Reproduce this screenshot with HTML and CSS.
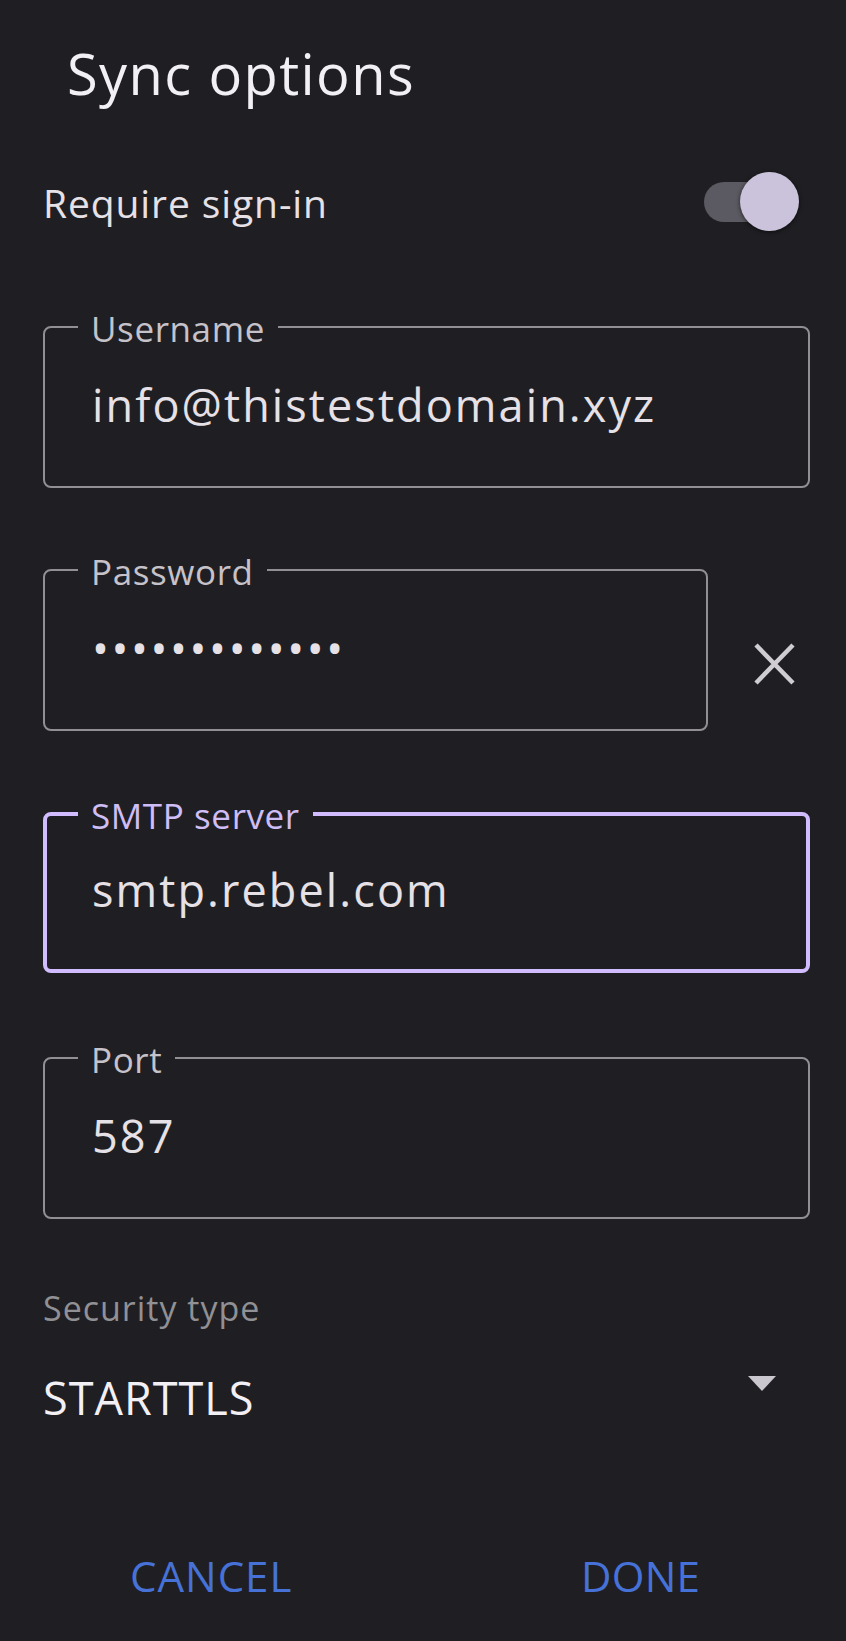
FILE: index.html
```html
<!DOCTYPE html>
<html lang="en">
<head>
  <meta charset="UTF-8">
  <meta name="viewport" content="width=device-width, initial-scale=1.0">
  <title>Sync options</title>
  <link rel="stylesheet" href="styles.css">
</head>
<body>
  <div class="dialog">
    <h1 class="title">Sync options</h1>

    <div class="switch-row">
      <span class="switch-label">Require sign-in</span>
      <span class="switch on">
        <span class="switch-track"></span>
        <span class="switch-thumb"></span>
      </span>
    </div>

    <fieldset class="field">
      <legend>Username</legend>
      <input type="text" value="info@thistestdomain.xyz">
    </fieldset>

    <div class="field-row">
      <fieldset class="field">
        <legend>Password</legend>
        <input type="password" class="secret" value="passwordpass1">
      </fieldset>
      <button type="button" class="clear" aria-label="Clear password">
        <svg width="43" height="42" viewBox="0 0 43 42">
          <path d="M3 2 L40 40 M40 2 L3 40" stroke="#cfcdd2" stroke-width="4.5" fill="none"/>
        </svg>
      </button>
    </div>

    <fieldset class="field focused">
      <legend>SMTP server</legend>
      <input type="text" value="smtp.rebel.com">
    </fieldset>

    <fieldset class="field">
      <legend>Port</legend>
      <input type="text" value="587">
    </fieldset>

    <div class="select-label">Security type</div>
    <div class="select">
      <span class="select-value">STARTTLS</span>
      <span class="select-arrow"></span>
    </div>

    <div class="actions">
      <button type="button" class="text-btn">CANCEL</button>
      <button type="button" class="text-btn">DONE</button>
    </div>
  </div>
</body>
</html>
```

FILE: styles.css
```css
body {
  margin: 0;
  background-color: #1f1f23;
  font-family: "Open Sans", Roboto, sans-serif;
  color: #e6e1e6;
}
.dialog {
  padding: 40px 36px 40px 43px;
}
.title {
  margin: 0;
  padding-left: 24px;
  font-size: 56px;
  font-weight: 400;
  line-height: 67px;
  letter-spacing: 1.4px;
  color: #f3f0f5;
}
.switch-row {
  display: flex;
  align-items: center;
  justify-content: space-between;
  height: 60px;
  margin-top: 65px;
}
.switch-label {
  font-size: 39px;
  line-height: 47px;
  letter-spacing: 0.9px;
}
.switch {
  position: relative;
  width: 95px;
  height: 60px;
  margin-right: 11px;
}
.switch-track {
  position: absolute;
  left: 0;
  top: 10px;
  width: 84px;
  height: 40px;
  border-radius: 20px;
  background-color: #5b5961;
}
.switch-thumb {
  position: absolute;
  right: 0;
  top: 0;
  width: 59px;
  height: 59px;
  border-radius: 50%;
  background-color: #cbc3db;
  box-shadow: 0 1px 4px rgba(0,0,0,0.6);
}

/* outlined text fields */
.field {
  margin: 71px 0 0;
  padding: 26px 24px 53px 33px;
  border: 2px solid #918e94;
  border-radius: 8px;
  min-width: 0;
}
.field legend {
  padding: 4px 13px 0;
  font-size: 35px;
  line-height: 44px;
  letter-spacing: 0.6px;
  color: #c6c2c9;
}
.field input {
  display: block;
  width: 100%;
  height: 56px;
  margin: 0;
  padding: 0 0 0 14px;
  border: none;
  outline: none;
  background: transparent;
  font-family: inherit;
  font-size: 45px;
  line-height: 56px;
  letter-spacing: 2.1px;
  color: #e6e1e6;
  box-sizing: border-box;
}
.field input.secret {
  letter-spacing: 2.6px;
}
.field.focused {
  padding: 24px 22px 51px 31px;
  border: 4px solid #d0bcff;
}
.field.focused legend {
  color: #cfbdf5;
}
.field-row {
  display: flex;
  align-items: flex-start;
  margin-top: 58px;
}
.field-row .field {
  flex: 1;
  margin-top: 0;
}
.field-row + .field.focused {
  margin-top: 59px;
}
.focused + .field {
  margin-top: 61px;
}
.clear {
  margin: 97px 14px 0 45px;
  padding: 0;
  border: none;
  background: none;
  width: 43px;
  height: 42px;
}
.clear svg {
  display: block;
}

/* dropdown */
.select-label {
  margin-top: 69px;
  font-size: 34px;
  line-height: 40px;
  letter-spacing: 1px;
  color: #919094;
}
.select {
  display: flex;
  justify-content: space-between;
  align-items: flex-start;
  margin-top: 42px;
  height: 56px;
}
.select-value {
  font-size: 45px;
  line-height: 56px;
  letter-spacing: 1px;
  color: #f3f0f5;
}
.select-arrow {
  margin: 6px 34px 0 0;
  width: 0;
  height: 0;
  border-left: 14.5px solid transparent;
  border-right: 14.5px solid transparent;
  border-top: 15px solid #cbc7cf;
}

.actions {
  display: flex;
  justify-content: space-between;
  margin-top: 125px;
  padding: 0 110px 0 87px;
}
.text-btn {
  padding: 0;
  border: none;
  background: none;
  font-family: inherit;
  font-size: 42px;
  line-height: 50px;
  letter-spacing: 1px;
  color: #4672d8;
  cursor: pointer;
}
.text-btn + .text-btn {
  letter-spacing: 0.2px;
}
```
